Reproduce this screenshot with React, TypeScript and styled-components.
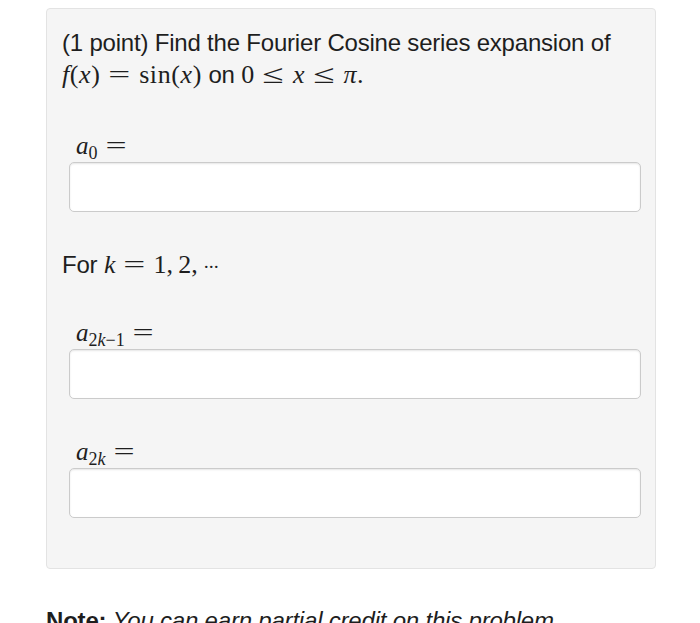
import React from "react";
import styled, { createGlobalStyle } from "styled-components";

const Global = createGlobalStyle`
  html, body { margin: 0; padding: 0; background: #ffffff; }
  body { font-family: "Liberation Sans", Arial, sans-serif; color: #1e1e1e; }
`;

const Page = styled.div`
  width: 610px;
  padding: 8px 0 0 46px;
`;

const Panel = styled.div`
  background: #f5f5f5;
  border: 1px solid #e3e3e3;
  border-radius: 4px;
  padding: 18px 15px 50px 15px;
`;

const Prose = styled.p<{ $mt?: number }>`
  margin: ${(p) => p.$mt ?? 0}px 0 0 0;
  font-size: 24px;
  line-height: 32px;
  letter-spacing: -0.2px;
`;

const M = styled.span<{ $tight?: boolean }>`
  font-family: "Liberation Serif", "Times New Roman", serif;
  font-size: 26px;
  letter-spacing: ${(p) => (p.$tight ? "0" : "0.6px")};
  white-space: nowrap;
`;

const V = styled.i`
  font-style: italic;
`;

const Op = styled.span`
  display: inline-block;
  transform: scaleX(1.5);
  margin: 0 0.45em;
`;

const Dots = styled.span`
  font-size: 0.75em;
  letter-spacing: -1.5px;
`;

const Sub = styled.sub`
  font-size: 0.72em;
  vertical-align: -0.28em;
  line-height: 0;
`;

const Label = styled.div<{ $mt: number }>`
  margin: ${(p) => p.$mt}px 0 0 14px;
  height: 30px;
  line-height: 30px;
  font-family: "Liberation Serif", "Times New Roman", serif;
  font-size: 25px;
`;

const Field = styled.input`
  display: block;
  box-sizing: border-box;
  margin: 1px -1px 0 7px;
  width: calc(100% - 6px);
  height: 50px;
  background: #ffffff;
  border: 1px solid #cbcbcb;
  border-radius: 5px;
  box-shadow: inset 0 1px 2px rgba(0, 0, 0, 0.1);
  font-size: 20px;
  padding: 0 10px;
  outline: none;
`;

const Note = styled.p`
  margin: 36px 0 0 0;
  font-size: 24px;
  line-height: 32px;
  letter-spacing: -0.2px;
  white-space: nowrap;
`;

export default function App() {
  return (
    <>
      <Global />
      <Page>
        <Panel>
          <Prose>
            (1 point) Find the Fourier Cosine series expansion of
            <br />
            <M>
              <V>f</V>(<V>x</V>)<Op>=</Op>sin(<V>x</V>)
            </M>{" "}
            on{" "}
            <M>
              0<Op>≤</Op>
              <V>x</V>
              <Op>≤</Op>
              <V>π</V>.
            </M>
          </Prose>

          <Label $mt={40}>
            <V>a</V>
            <Sub>0</Sub>
            <Op>=</Op>
          </Label>
          <Field type="text" />

          <Prose $mt={37}>
            For{" "}
            <M $tight>
              <V>k</V>
              <Op>=</Op>1,{"\u2009"}2,{"\u2009"}
              <Dots>···</Dots>
            </M>
          </Prose>

          <Label $mt={35}>
            <V>a</V>
            <Sub>
              2<V>k</V>−1
            </Sub>
            <Op>=</Op>
          </Label>
          <Field type="text" />

          <Label $mt={38}>
            <V>a</V>
            <Sub>
              2<V>k</V>
            </Sub>
            <Op>=</Op>
          </Label>
          <Field type="text" />
        </Panel>
        <Note>
          <b>Note:</b> <i>You can earn partial credit on this problem.</i>
        </Note>
      </Page>
    </>
  );
}
